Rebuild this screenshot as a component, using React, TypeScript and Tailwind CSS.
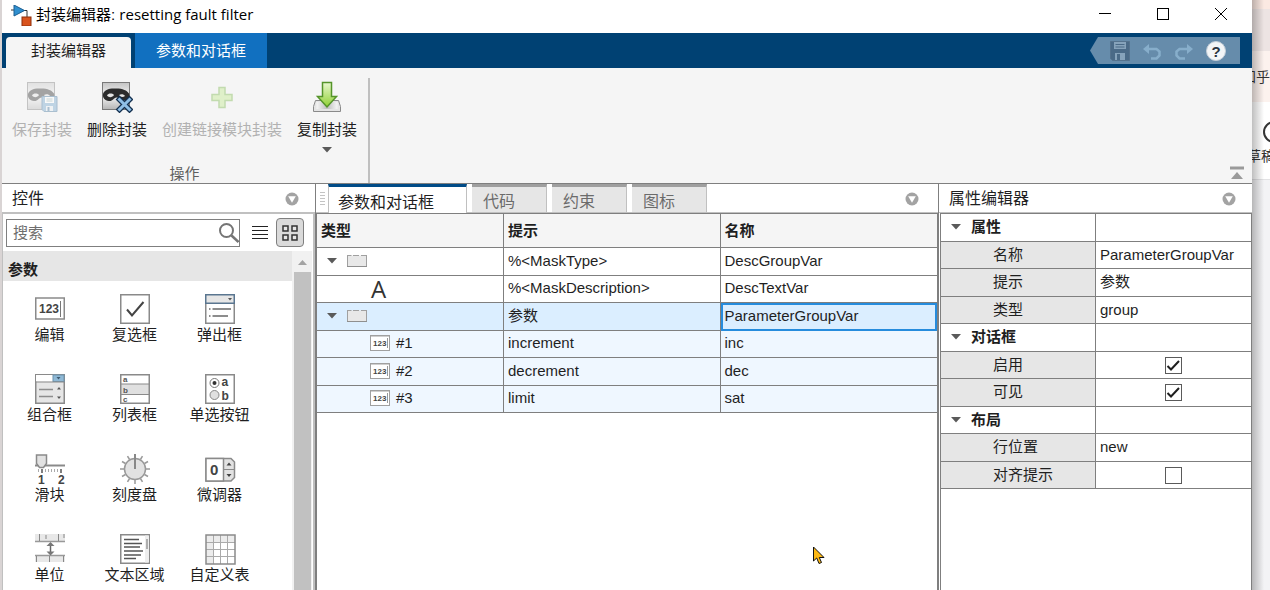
import React, { useState } from 'react';

type IconProps = { className?: string };

// Toolstrip icons

const MaskShape = () => (
  <>
    <rect x="1.5" y="1.5" width="27" height="27" fill="url(#maskBg)" stroke="#7a7a7a" />
    <path
      d="M2 13c1-4 6-6 13-5.500 7 0 11 2 13 5 1.500 4-1 7-4.500 7-3 0-5-3.500-8-3-3 .6-4 4-7.500 3.500C3.500 19.500 1.500 17 2 13z"
      fill="#2b2b2b"
    />
    <path d="M6 14.500c1.500-2.500 5-2.500 7-.5-1.500 2.500-5 3-7 .5z" fill="#e4e4e4" />
    <path d="M18 14c2-1.500 5-1 6 1-2 1.500-5 1.200-6-1z" fill="#e4e4e4" />
  </>
);

const MaskGradient = () => (
  <defs>
    <linearGradient id="maskBg" x1="0" y1="0" x2="0" y2="1">
      <stop offset="0" stopColor="#c4c4c4" />
      <stop offset="0.5" stopColor="#f4f4f4" />
      <stop offset="1" stopColor="#b5b5b5" />
    </linearGradient>
  </defs>
);

const SaveMaskIcon = () => (
  <svg viewBox="0 0 32 32" className="h-8 w-8 opacity-40">
    <MaskGradient />
    <MaskShape />
    <path d="M16 15.500h15v15H18l-2-2z" fill="#6fa3cc" stroke="#3d6f99" />
    <rect x="19" y="16" width="9" height="6" fill="#fff" />
    <path d="M20.500 18h6M20.500 20h6" stroke="#8aa" />
    <rect x="20" y="25" width="7" height="5" fill="#e8eef4" />
    <rect x="21.500" y="26" width="2" height="4" fill="#3d6f99" />
  </svg>
);

const DeleteMaskIcon = () => (
  <svg viewBox="0 0 32 32" className="h-8 w-8">
    <MaskGradient />
    <MaskShape />
    <path d="M18.500 18.500l10 10M28.500 18.500l-10 10" stroke="#14304f" strokeWidth="5.500" strokeLinecap="square" />
    <path d="M18.500 18.500l10 10M28.500 18.500l-10 10" stroke="#8fbfe6" strokeWidth="3" strokeLinecap="square" />
  </svg>
);

const PlusIcon = () => (
  <svg viewBox="0 0 32 32" className="h-8 w-8 opacity-45">
    <path d="M13 6.500h6v7h7v6h-7v7h-6v-7H6v-6h7z" fill="#c5ea94" stroke="#86bd5c" strokeWidth="1.500" />
  </svg>
);

const CopyMaskIcon = () => (
  <svg viewBox="0 0 32 32" className="h-8 w-8">
    <defs>
      <linearGradient id="arrowFill" x1="0" y1="0" x2="0" y2="1">
        <stop offset="0" stopColor="#e9f8cf" />
        <stop offset="1" stopColor="#8fd032" />
      </linearGradient>
      <linearGradient id="trayFill" x1="0" y1="0" x2="1" y2="0">
        <stop offset="0" stopColor="#f6f6f6" />
        <stop offset="0.5" stopColor="#bdbdbd" />
        <stop offset="1" stopColor="#f6f6f6" />
      </linearGradient>
    </defs>
    <path d="M4.500 19.500h23l2 6v5h-27v-5z" fill="#e4e4e4" stroke="#8a8a8a" />
    <rect x="5.500" y="21" width="21" height="7" fill="url(#trayFill)" />
    <path d="M11.500 1.500h9v14h5L16 26 6.500 15.500h5z" fill="url(#arrowFill)" stroke="#55942a" strokeWidth="1.500" />
  </svg>
);

const Triangle = ({ className = '' }: IconProps) => (
  <svg viewBox="0 0 10 6" className={`h-1.5 w-2.5 shrink-0 ${className}`}>
    <path d="M0 0h10L5 5.500z" fill="#5a5a5a" />
  </svg>
);

// Round grey menu button at the right of every panel title
const PanelMenu = ({ label }: { label: string }) => (
  <button aria-label={label} className="ml-auto">
    <svg viewBox="0 0 14 14" className="h-3.5 w-3.5">
      <circle cx="7" cy="7" r="6.500" fill="#a3a3a3" />
      <path d="M3.200 4.200h7.600L7 10.800z" fill="#fff" />
    </svg>
  </button>
);

// Palette icons

const svgText = { fontFamily: '"Liberation Sans", sans-serif' };

const EditIcon = () => (
  <>
    <rect x="0.750" y="4" width="28.500" height="21" fill="#fff" stroke="#8a8a8a" strokeWidth="1.500" />
    <text x="4" y="18.500" fontSize="12" fontWeight="700" fill="#444" style={svgText}>123</text>
    <path d="M25.500 7v16" stroke="#777" />
  </>
);

const CheckIcon = () => (
  <>
    <rect x="0.750" y="0.750" width="28.500" height="28.500" fill="#fff" stroke="#8a8a8a" strokeWidth="1.500" />
    <path d="M7 15.500l5 6L23.500 8" fill="none" stroke="#444" strokeWidth="2" />
  </>
);

const PopupIcon = () => (
  <>
    <rect x="0.750" y="0.750" width="28.500" height="28.500" fill="#fff" stroke="#8a8a8a" strokeWidth="1.500" />
    <rect x="0.750" y="0.750" width="28.500" height="8.500" fill="#e6e6e6" stroke="#5a7690" strokeWidth="1.500" />
    <path d="M23 4h4l-2 2.500z" fill="#555" />
    <path d="M4 15h1.500M4 22h1.500M7.500 15H26M7.500 22H23" stroke="#8d8d8d" strokeWidth="2" />
  </>
);

const ComboIcon = () => (
  <>
    <rect x="0.750" y="0.750" width="28.500" height="28.500" fill="#e6e6e6" stroke="#8a8a8a" strokeWidth="1.500" />
    <rect x="1" y="1" width="17" height="6.500" fill="#fff" />
    <rect x="18" y="1" width="11" height="6.500" fill="#8fb9d6" stroke="#6d93ad" />
    <path d="M21.500 3h4l-2 2.500z" fill="#3e5a70" />
    <path d="M1 8h28" stroke="#8a8a8a" />
    <path d="M4 15.500h14M4 22.500h14" stroke="#8d8d8d" strokeWidth="1.500" />
    <path d="M22 15.500h4l-2-2.500zM22 22.500h4l-2 2.500z" fill="#555" />
  </>
);

const ListIcon = () => (
  <>
    <rect x="0.750" y="0.750" width="28.500" height="28.500" fill="#fff" stroke="#8a8a8a" strokeWidth="1.500" />
    <rect x="1" y="10" width="28" height="10.500" fill="#e0e0e0" stroke="#8a8a8a" />
    <text x="3" y="8" fontSize="8" fontWeight="700" fill="#555" style={svgText}>a</text>
    <text x="3" y="18.500" fontSize="8" fontWeight="700" fill="#555" style={svgText}>b</text>
    <text x="3" y="28" fontSize="8" fontWeight="700" fill="#555" style={svgText}>c</text>
  </>
);

const RadioIcon = () => (
  <>
    <rect x="0.750" y="0.750" width="28.500" height="28.500" fill="#fff" stroke="#8a8a8a" strokeWidth="1.500" />
    <circle cx="9.500" cy="9" r="4.500" fill="#fff" stroke="#777" />
    <circle cx="9.500" cy="9" r="2" fill="#333" />
    <circle cx="9.500" cy="21" r="4.500" fill="#e0e0e0" stroke="#888" />
    <text x="16.500" y="11.500" fontSize="12" fontWeight="700" fill="#444" style={svgText}>a</text>
    <text x="16.500" y="25.500" fontSize="12" fontWeight="700" fill="#444" style={svgText}>b</text>
  </>
);

const SliderIcon = () => (
  <>
    <path d="M0 11.500h30" stroke="#8a8a8a" strokeWidth="2" />
    <path d="M1.500 1h10v8.500l-3 4h-4l-3-4z" fill="#e2e2e2" stroke="#8a8a8a" strokeWidth="1.500" />
    <path d="M7 15v4M26 15v4" stroke="#555" strokeWidth="1.500" />
    <path d="M3.500 15v3M10.500 15v3M13.500 15v3M16.500 15v3M19.500 15v3M22.500 15v3" stroke="#aaa" />
    <text x="3" y="30" fontSize="12" fontWeight="700" fill="#444" style={svgText}>1</text>
    <text x="23" y="30" fontSize="12" fontWeight="700" fill="#444" style={svgText}>2</text>
  </>
);

const DialIcon = () => (
  <>
    {[0, 30, 60, 90, 120, 150, 180, 210, 240, 270, 300, 330].map((angle) => (
      <path key={angle} d="M15 0v4" stroke="#999" strokeWidth="1.500" transform={`rotate(${angle} 15 15)`} />
    ))}
    <circle cx="15" cy="15" r="10.500" fill="#e2e2e2" stroke="#999" strokeWidth="1.500" />
    <path d="M15 0v15" stroke="#888" strokeWidth="2" />
  </>
);

const SpinnerIcon = () => (
  <>
    <path d="M1 4.500h25l3.500 3.500v15.500l-3.500 3.500H1z" fill="#e2e2e2" stroke="#8a8a8a" strokeWidth="1.500" />
    <rect x="1" y="4.500" width="17.500" height="22.500" fill="#fff" stroke="#8a8a8a" strokeWidth="1.500" />
    <path d="M19 15.500h10" stroke="#8a8a8a" />
    <path d="M21.500 11.500h5l-2.500-3zM21.500 20h5L24 23z" fill="#444" />
    <text x="5" y="21" fontSize="15" fontWeight="700" fill="#444" style={svgText}>0</text>
  </>
);

const UnitIcon = () => (
  <>
    <path d="M0 0h30v7H0zM0 22h30v6H0z" fill="#e8e8e8" />
    <path d="M0 7.500h30M0 21.500h30" stroke="#999" strokeWidth="1.500" />
    <path d="M4.500 0v7M11 1v4M23.500 0v7M29 0v4M1.500 22v6M14.500 22v6M28.500 22v6" stroke="#888" />
    <path d="M15.500 9v11" stroke="#666" strokeWidth="1.500" />
    <path d="M11.500 12l4-4 4 4zM11.500 17.500l4 4 4-4z" fill="#777" />
  </>
);

const TextAreaIcon = () => (
  <>
    <rect x="0.750" y="0.750" width="28.500" height="28.500" fill="#fff" stroke="#8a8a8a" strokeWidth="1.500" />
    <rect x="25" y="1.500" width="4" height="27" fill="#eee" />
    <path d="M27 5v10" stroke="#999" strokeWidth="1.500" />
    <path d="M4 5.500h15M4 9.500h18M4 13h16M4 17h19M4 21h17M4 24.500h12" stroke="#555" strokeWidth="1.500" />
  </>
);

const TableIcon = () => (
  <>
    <rect x="1" y="1" width="29" height="29" fill="#fff" />
    <path d="M1 1h29v7H1zM1 8h7v22H1z" fill="#ececec" />
    <path d="M1 8.500h29M1 15.500h29M1 22.500h29M8.500 1v29M15.500 1v29M22.500 1v29" stroke="#aaa" />
    <rect x="1" y="1" width="29" height="29" fill="none" stroke="#8a8a8a" strokeWidth="1.500" />
  </>
);

const palette = [
  { label: '编辑', icon: <EditIcon /> },
  { label: '复选框', icon: <CheckIcon /> },
  { label: '弹出框', icon: <PopupIcon /> },
  { label: '组合框', icon: <ComboIcon /> },
  { label: '列表框', icon: <ListIcon /> },
  { label: '单选按钮', icon: <RadioIcon /> },
  { label: '滑块', icon: <SliderIcon /> },
  { label: '刻度盘', icon: <DialIcon /> },
  { label: '微调器', icon: <SpinnerIcon /> },
  { label: '单位', icon: <UnitIcon /> },
  { label: '文本区域', icon: <TextAreaIcon /> },
  { label: '自定义表', icon: <TableIcon /> },
];

// Icons of the parameter tree

const GroupIcon = () => (
  <svg viewBox="0 0 20 12" className="h-3 w-5">
    <path d="M.5.5v11h19V.5" fill="#e8e8e8" stroke="#a0a0a0" />
    <path d="M0 .5h4.500M6 .5h6M14 .5h6" stroke="#a0a0a0" />
    <path d="M0 11.500h20" stroke="#8f8f8f" />
  </svg>
);

const SmallEditIcon = () => (
  <svg viewBox="0 0 20 16" className="h-4 w-5">
    <rect x="0.500" y="0.500" width="19" height="15" fill="#fff" stroke="#a0a0a0" />
    <path d="M0 1h20" stroke="#a0a0a0" />
    <text x="3" y="11" fontSize="8" fontWeight="700" fill="#444" style={svgText}>123</text>
    <path d="M17.500 3v10" stroke="#999" />
  </svg>
);

const rows = [
  { kind: 'group', index: '', prompt: '%<MaskType>', name: 'DescGroupVar', bg: 'bg-white' },
  { kind: 'text', index: '', prompt: '%<MaskDescription>', name: 'DescTextVar', bg: 'bg-white' },
  { kind: 'group', index: '', prompt: '参数', name: 'ParameterGroupVar', bg: 'bg-[#dbeeff]', active: true },
  { kind: 'edit', index: '#1', prompt: 'increment', name: 'inc', bg: 'bg-[#eff7ff]' },
  { kind: 'edit', index: '#2', prompt: 'decrement', name: 'dec', bg: 'bg-[#eff7ff]' },
  { kind: 'edit', index: '#3', prompt: 'limit', name: 'sat', bg: 'bg-[#eff7ff]' },
];

type Prop = { id: string; label: string; type: 'header' | 'text' | 'check'; value?: string };

const properties: Prop[] = [
  { id: 'props', label: '属性', type: 'header' },
  { id: 'name', label: '名称', type: 'text', value: 'ParameterGroupVar' },
  { id: 'prompt', label: '提示', type: 'text', value: '参数' },
  { id: 'type', label: '类型', type: 'text', value: 'group' },
  { id: 'dialog', label: '对话框', type: 'header' },
  { id: 'enable', label: '启用', type: 'check' },
  { id: 'visible', label: '可见', type: 'check' },
  { id: 'layout', label: '布局', type: 'header' },
  { id: 'row', label: '行位置', type: 'text', value: 'new' },
  { id: 'align', label: '对齐提示', type: 'check' },
];

const TitleBar = () => (
  <header className="flex h-[33px] shrink-0 items-stretch bg-white pr-0.5 pl-[9px] text-black">
    <div className="flex items-center gap-1 pb-[3px]">
      <svg viewBox="0 0 21 21" className="h-[21px] w-[21px]">
        <path d="M0 5h3M11 5.500h5V13" fill="none" stroke="#333" />
        <path d="M3 0l10.500 5.500L3 11z" fill="#2f8fcf" stroke="#1c5f92" />
        <rect x="11" y="12" width="9" height="9" fill="#d9541e" stroke="#8e2f0b" />
      </svg>
      <h1 className="text-[15px]">
        封装编辑器: <span className="font-['Open_Sans']">resetting fault filter</span>
      </h1>
    </div>
    <div className="ml-auto flex pb-[5px]">
      <button aria-label="最小化" className="flex w-[58px] items-center justify-center">
        <svg viewBox="0 0 12 12" className="h-3 w-3"><path d="M0 5.500h12" stroke="#000" /></svg>
      </button>
      <button aria-label="最大化" className="flex w-[58px] items-center justify-center">
        <svg viewBox="0 0 12 12" className="h-3 w-3"><rect x="0.500" y="0.500" width="11" height="11" fill="none" stroke="#000" /></svg>
      </button>
      <button aria-label="关闭" className="flex w-[58px] items-center justify-center">
        <svg viewBox="0 0 12 12" className="h-3 w-3"><path d="M0 0l12 12M12 0L0 12" stroke="#000" /></svg>
      </button>
    </div>
  </header>
);

const QuickAccess = () => (
  <div className="mr-3 ml-auto flex h-[27px] items-center self-center gap-3 bg-[#668cab] pr-3.5 pl-5 [clip-path:polygon(8px_0,100%_0,100%_100%,8px_100%,0_50%)]">
    <button aria-label="保存" disabled>
      <svg viewBox="0 0 20 20" className="h-5 w-5">
        <path d="M.5.5h19v19H2.500l-2-2z" fill="#4a6a87" stroke="#54728d" />
        <rect x="4" y="1" width="12" height="7" fill="#86a3bb" />
        <path d="M5.500 3.500h9M5.500 6h9" stroke="#4a6a87" />
        <rect x="5" y="12" width="10" height="7" fill="#86a3bb" />
        <rect x="7" y="13" width="3" height="6" fill="#4a6a87" />
      </svg>
    </button>
    <button aria-label="撤消" disabled>
      <svg viewBox="0 0 20 20" className="h-5 w-5">
        <path d="M4 8h10.500l3 2.500v4l-3 3H9" fill="none" stroke="#87aecb" strokeWidth="2.500" />
        <path d="M1 8l6-5v10z" fill="#87aecb" />
      </svg>
    </button>
    <button aria-label="重做" disabled>
      <svg viewBox="0 0 20 20" className="h-5 w-5">
        <path d="M16 8H5.500l-3 2.500v4l3 3H11" fill="none" stroke="#87aecb" strokeWidth="2.500" />
        <path d="M19 8l-6-5v10z" fill="#87aecb" />
      </svg>
    </button>
    <button aria-label="帮助">
      <svg viewBox="0 0 20 20" className="h-5 w-5">
        <circle cx="10" cy="10" r="9.500" fill="#f3f5f7" stroke="#c4ced8" />
        <text x="10" y="15.500" fontSize="15" fontWeight="700" fill="#2c3440" textAnchor="middle" style={svgText}>?</text>
      </svg>
    </button>
  </div>
);

const ToolButton = ({ label, icon, disabled, menu }: { label: string; icon: React.ReactNode; disabled?: boolean; menu?: boolean }) => (
  <button disabled={disabled} className="flex flex-col items-center text-[15px] leading-5 text-[#1f1f1f] disabled:text-[#b2b2b2]">
    {icon}
    <span className="mt-[7px]">{label}</span>
    {menu && <Triangle className="mt-[7px]" />}
  </button>
);

const Ribbon = () => (
  <div className="flex h-[116px] shrink-0 border-b border-[#7f7f7f] bg-[#f5f5f5]">
    <section className="mt-2.5 flex flex-col border-r-2 border-[#c0c0c0] pt-[3px] pr-[11px] pl-2.5">
      <div className="flex items-start gap-[15px]">
        <ToolButton label="保存封装" icon={<SaveMaskIcon />} disabled />
        <ToolButton label="删除封装" icon={<DeleteMaskIcon />} />
        <ToolButton label="创建链接模块封装" icon={<PlusIcon />} disabled />
        <ToolButton label="复制封装" icon={<CopyMaskIcon />} menu />
      </div>
      <h2 className="mt-auto text-center text-[15px] leading-[18px] text-[#5f5f5f]">操作</h2>
    </section>
    <button aria-label="最小化工具条" className="mt-auto mr-2 mb-[3px] ml-auto">
      <svg viewBox="0 0 14 14" className="h-3.5 w-3.5">
        <path d="M0 2h14" stroke="#9a9a9a" strokeWidth="3" />
        <path d="M1 13h12L7 6z" fill="#9a9a9a" />
      </svg>
    </button>
  </div>
);

const ControlsPanel = () => (
  <aside className="flex w-[314px] shrink-0 flex-col border-r border-[#7f7f7f]">
    <div className="flex h-[30px] shrink-0 items-center border-b-2 border-[#c0c0c0] pt-0.5 pr-4 pl-2.5">
      <h2 className="text-base">控件</h2>
      <PanelMenu label="控件菜单" />
    </div>
    <div className="flex min-h-0 flex-1 flex-col border-r-2 border-l border-[#c0c0c0] pr-px">
      <div className="flex h-[37px] shrink-0 items-center pr-2 pl-[3px]">
        <div className="flex h-7 flex-1 items-center border border-[#7f7f7f]">
          <input
            aria-label="搜索"
            placeholder="搜索"
            className="min-w-0 flex-1 pt-0.5 pl-1.5 text-[15px] outline-none placeholder:text-[#6e6e6e]"
          />
          <svg viewBox="0 0 21 21" className="h-[21px] w-[21px]">
            <circle cx="8.500" cy="8.500" r="6.500" fill="none" stroke="#757575" strokeWidth="2" />
            <path d="M13.500 13.500l7 6.500" stroke="#757575" strokeWidth="2.500" />
          </svg>
        </div>
        <button aria-label="列表视图" className="mx-2 flex h-[30px] w-5 items-center justify-center pl-1">
          <svg viewBox="0 0 16 14" className="h-3.5 w-4">
            <path d="M0 .5h16M0 4.500h16M0 8.500h16M0 12.500h16" stroke="#222" strokeWidth="1.200" />
          </svg>
        </button>
        <button aria-label="网格视图" className="flex h-[29px] w-7 items-center justify-center rounded-sm border border-[#7f7f7f] bg-[#dadada]">
          <svg viewBox="0 0 16 16" className="h-4 w-4">
            <path d="M1 1h5v5H1zM10 1h5v5h-5zM1 10h5v5H1zM10 10h5v5h-5z" fill="#e6e6e6" stroke="#333" strokeWidth="1.500" />
          </svg>
        </button>
      </div>
      <div className="flex min-h-0 flex-1">
        <div className="flex-1 overflow-hidden">
          <h3 className="flex h-[30px] items-end bg-[#e6e6e6] pl-[5px] text-[15px] font-bold">参数</h3>
          <div className="grid grid-cols-[repeat(3,85px)] pt-[13px] pl-1">
            {palette.map((item) => (
              <button key={item.label} className="flex h-20 flex-col items-center gap-px text-[15px] leading-5">
                <svg viewBox="0 0 30 30" className="h-[30px] w-[30px] shrink-0 overflow-visible">{item.icon}</svg>
                {item.label}
              </button>
            ))}
          </div>
        </div>
        <div className="flex w-5 shrink-0 flex-col bg-[#f1f1f1] pr-px pl-0.5">
          <svg viewBox="0 0 17 21" className="h-[21px] w-[17px] shrink-0">
            <path d="M4 14h9L8.500 9z" fill="#a3a3a3" />
          </svg>
          <div className="flex-1 bg-[#c1c1c1]" />
        </div>
      </div>
    </div>
  </aside>
);

const tabs = ['代码', '约束', '图标'];

const ParameterPanel = () => (
  <main className="flex min-w-0 flex-1 flex-col">
    <div className="flex h-[29px] shrink-0 border-b border-[#c0c0c0]">
      <svg viewBox="0 0 5 14" className="mx-1 mt-2 h-3.5 w-[5px]">
        <path d="M0 .5h5M0 3.500h5M0 6.500h5M0 9.500h5M0 12.500h5" stroke="#c4c4c4" />
      </svg>
      <button className="-mb-px ml-[-1px] w-[139px] border-t-3 border-r border-l border-t-[#004b87] border-x-[#c0c0c0] bg-white pt-1 pl-[9px] text-left text-base leading-6">
        参数和对话框
      </button>
      <div className="ml-[5px] flex gap-[5px]">
        {tabs.map((tab) => (
          <button key={tab} className="w-[75px] border-t-3 border-r border-t-[#9f9f9f] border-r-[#c0c0c0] bg-[#e6e6e6] pt-[3px] pl-[11px] text-left text-base leading-6 text-[#6b6b6b]">
            {tab}
          </button>
        ))}
      </div>
      <div className="ml-auto flex items-center pt-0.5 pr-[19px]">
        <PanelMenu label="参数菜单" />
      </div>
    </div>
    <div className="flex-1 border-x border-t border-[#7f7f7f]">
      <table className="w-full table-fixed border-separate border-spacing-0 text-left text-[15px] leading-5">
        <colgroup>
          <col className="w-[187px]" />
          <col />
          <col />
        </colgroup>
        <thead>
          <tr className="h-[34px] bg-[#f5f5f5]">
            <th className="border-r border-b border-[#7f7f7f] p-0 pl-1 font-bold">类型</th>
            <th className="border-r border-b border-[#7f7f7f] p-0 pl-1 font-bold">提示</th>
            <th className="border-b border-[#7f7f7f] p-0 pl-1 font-bold">名称</th>
          </tr>
        </thead>
        <tbody>
          {rows.map((row) => (
            <tr key={row.name} className={`odd:h-7 even:h-[27px] ${row.bg}`}>
              <td className="border-r border-b border-[#7f7f7f] p-0 pb-0.5">
                <div className="flex h-5 items-center">
                  {row.kind === 'group' && (
                    <div className="flex items-center gap-2.5 pl-2.5">
                      <Triangle />
                      <GroupIcon />
                    </div>
                  )}
                  {row.kind === 'text' && (
                    <span className="pt-0.5 pl-[54px] font-['Open_Sans'] text-2xl leading-5 text-[#333]">A</span>
                  )}
                  {row.kind === 'edit' && (
                    <div className="flex items-center gap-1.5 pl-[53px]">
                      <SmallEditIcon />
                      {row.index}
                    </div>
                  )}
                </div>
              </td>
              <td className="border-r border-b border-[#7f7f7f] p-0 pb-0.5 pl-1">{row.prompt}</td>
              <td className={`border-b border-[#7f7f7f] p-0 pb-0.5 pl-1 ${row.active ? 'outline-2 -outline-offset-2 outline-[#268cdd]' : ''}`}>
                {row.name}
              </td>
            </tr>
          ))}
        </tbody>
      </table>
    </div>
  </main>
);

const PropertyPanel = () => {
  const [checked, setChecked] = useState<Record<string, boolean>>({ enable: true, visible: true, align: false });

  return (
    <aside className="flex w-[314px] shrink-0 flex-col border-l border-[#7f7f7f]">
      <div className="flex h-[29px] shrink-0 items-center border-b border-[#c0c0c0] pt-0.5 pr-4 pl-2.5">
        <h2 className="text-base">属性编辑器</h2>
        <PanelMenu label="属性菜单" />
      </div>
      <div className="ml-px flex-1 border-x border-t border-[#7f7f7f]">
        <table className="w-full table-fixed border-separate border-spacing-0 text-left text-[15px] leading-5">
          <tbody>
            {properties.map((prop) => (
              <tr key={prop.id} className="odd:h-7 even:h-[27px]">
                {prop.type === 'header' ? (
                  <th className="border-r border-b border-[#7f7f7f] p-0 pb-px font-bold">
                    <div className="flex items-center gap-2.5 pl-2.5">
                      <Triangle />
                      {prop.label}
                    </div>
                  </th>
                ) : (
                  <td className="border-r border-b border-[#7f7f7f] bg-[#e6e6e6] p-0 pb-px pl-[52px]">
                    <label htmlFor={prop.id}>{prop.label}</label>
                  </td>
                )}
                <td className="border-b border-[#7f7f7f] p-0">
                  {prop.type === 'text' && (
                    <input id={prop.id} defaultValue={prop.value} className="mb-px block h-5 w-full pl-1 outline-none" />
                  )}
                  {prop.type === 'check' && (
                    <div className="relative mx-auto h-[17px] w-[17px]">
                      <input
                        id={prop.id}
                        type="checkbox"
                        checked={checked[prop.id]}
                        onChange={(e) => setChecked({ ...checked, [prop.id]: e.target.checked })}
                        className="block h-[17px] w-[17px] appearance-none border border-[#5a5a5a] bg-white"
                      />
                      {checked[prop.id] && (
                        <svg viewBox="0 0 17 17" className="pointer-events-none absolute inset-0 h-[17px] w-[17px]">
                          <path d="M2.500 9l3.500 3.500L14 4" fill="none" stroke="#1f1f1f" strokeWidth="2" />
                        </svg>
                      )}
                    </div>
                  )}
                </td>
              </tr>
            ))}
          </tbody>
        </table>
      </div>
    </aside>
  );
};

// Slice of the browser window that shows behind the editor
const Backdrop = () => (
  <div className="relative flex w-[18px] shrink-0 flex-col overflow-hidden bg-[#f3f3f5] text-sm text-[#333]">
    <div className="h-[9px] bg-[#fbe9e2]" />
    <div className="h-[42px] bg-[#ede4e3]" />
    <div className="flex h-[51px] items-center justify-end bg-[#fcf2ee] whitespace-nowrap">知乎</div>
    <div className="flex h-[78px] flex-col items-center border-b border-[#e2e2e4] bg-white pt-[18px]">
      <svg viewBox="0 0 18 24" className="h-6 w-[18px]">
        <circle cx="22" cy="12" r="10" fill="none" stroke="#333" strokeWidth="2" />
      </svg>
      <span className="mt-0.5 whitespace-nowrap">草稿</span>
    </div>
    <div className="absolute inset-y-0 left-0 w-3 bg-linear-to-r from-black/25 to-transparent" />
  </div>
);

export default function App() {
  return (
    <div className="relative flex h-screen overflow-hidden bg-[#d9d4d4] pl-0.5 font-['Liberation_Sans','Noto_Sans_CJK_SC',sans-serif] text-[#1f1f1f]">
      <div className="flex min-w-0 flex-1 flex-col bg-white">
        <TitleBar />
        <nav className="flex h-[35px] shrink-0 bg-[#004173] pl-1 text-[15px]">
          <button className="mt-1 w-[125px] rounded-t-sm bg-[#f5f5f5] pb-0.5">封装编辑器</button>
          <button className="ml-1 w-[132px] bg-[#1170c0] pt-0.5 text-white">参数和对话框</button>
          <QuickAccess />
        </nav>
        <Ribbon />
        <div className="flex min-h-0 flex-1">
          <ControlsPanel />
          <ParameterPanel />
          <PropertyPanel />
        </div>
      </div>
      <Backdrop />
      {/* Mouse pointer */}
      <svg viewBox="0 0 12 19" className="pointer-events-none absolute top-[546px] left-[813px] h-[19px] w-3">
        <path d="M.5 1v14l3.200-3 2.300 5.500 2.500-1L6.300 11.500H11z" fill="#fdb813" stroke="#111" />
      </svg>
    </div>
  );
}
